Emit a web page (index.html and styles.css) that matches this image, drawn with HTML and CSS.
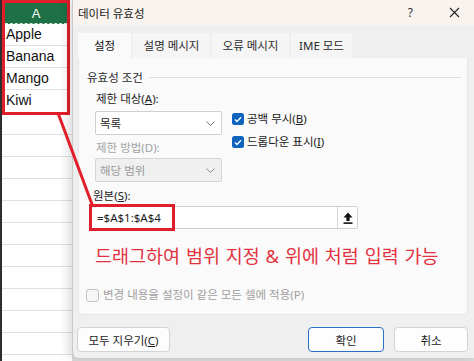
FILE: index.html
```html
<!DOCTYPE html>
<html lang="ko">

<head>
	<title>데이터 유효성</title>
	<meta charset="utf-8" />
	<link rel="stylesheet" href="styles.css">
</head>

<body>
	<div class="screen">
		<!-- Excel column behind the dialog -->
		<div class="sheet">
			<div class="pick">
				<div class="col-head">A</div>
				<div class="cell">Apple</div>
				<div class="cell">Banana</div>
				<div class="cell">Mango</div>
				<div class="cell">Kiwi</div>
			</div>
			<div class="cell first"></div>
			<div class="cell"></div>
			<div class="cell"></div>
			<div class="cell"></div>
			<div class="cell"></div>
			<div class="cell"></div>
			<div class="cell"></div>
			<div class="cell"></div>
			<div class="cell"></div>
			<div class="cell"></div>
			<div class="cell"></div>
		</div>

		<div class="dialog">
			<div class="titlebar">
				<span class="title">데이터 유효성</span>
				<span class="help">?</span>
				<svg class="close" width="11" height="11" viewBox="0 0 11 11">
					<path d="M1 1 L10 10 M10 1 L1 10" stroke="#222" stroke-width="1.1" fill="none" />
				</svg>
			</div>

			<div class="tabs">
				<div class="tab active" style="width: 53px">설정</div>
				<div class="tab" style="width: 77px">설명 메시지</div>
				<div class="tab" style="width: 77px">오류 메시지</div>
				<div class="tab" style="width: 61px">IME 모드</div>
			</div>

			<div class="panel">
				<div class="group">
					<span>유효성 조건</span>
					<span class="rule"></span>
				</div>

				<div class="limits">
					<label class="lbl">제한 대상(<u>A</u>):</label>
					<div class="select">
						<span>목록</span>
						<svg width="9" height="5" viewBox="0 0 9 5">
							<path d="M0.5 0.5 L4.5 4.5 L8.5 0.5" stroke="#777" stroke-width="1" fill="none" />
						</svg>
					</div>
					<label class="lbl off">제한 방법(D):</label>
					<div class="select disabled">
						<span>해당 범위</span>
						<svg width="9" height="5" viewBox="0 0 9 5">
							<path d="M0.5 0.5 L4.5 4.5 L8.5 0.5" stroke="#888" stroke-width="1" fill="none" />
						</svg>
					</div>
					<div class="checks">
						<div class="check">
							<span class="box on">
								<svg width="8" height="7" viewBox="0 0 8 7">
									<path d="M1 3.6 L3 5.6 L7 1.2" stroke="#fff" stroke-width="1.4" fill="none" />
								</svg>
							</span>
							<span>공백 무시(<u>B</u>)</span>
						</div>
						<div class="check">
							<span class="box on">
								<svg width="8" height="7" viewBox="0 0 8 7">
									<path d="M1 3.6 L3 5.6 L7 1.2" stroke="#fff" stroke-width="1.4" fill="none" />
								</svg>
							</span>
							<span>드롭다운 표시(<u>I</u>)</span>
						</div>
					</div>
				</div>

				<div class="source">
					<label class="lbl">원본(<u>S</u>):</label>
					<div class="input">
						<span class="value">=$A$1:$A$4</span>
						<span class="mark"></span>
						<span class="pickbtn">
							<svg width="10" height="12" viewBox="0 0 10 12">
								<path d="M5 0.5 L9.5 5.5 L6.6 5.5 L6.6 9 L3.4 9 L3.4 5.5 L0.5 5.5 Z" fill="#111" />
								<rect x="0.5" y="10.3" width="9" height="1.6" fill="#111" />
							</svg>
						</span>
					</div>
				</div>

				<div class="hint">드래그하여 범위 지정 &amp; 위에 처럼 입력 가능</div>

				<div class="apply">
					<span class="box"></span>
					<span>변경 내용을 설정이 같은 모든 셀에 적용(P)</span>
				</div>
			</div>

			<div class="buttons">
				<button class="btn clear">모두 지우기(<u>C</u>)</button>
				<button class="btn ok">확인</button>
				<button class="btn">취소</button>
			</div>
		</div>

		<!-- annotation line from the cells to the source box -->
		<svg class="arrow" width="474" height="361" viewBox="0 0 474 361">
			<line x1="58" y1="113" x2="93" y2="207" stroke="#e11f2b" stroke-width="3" />
		</svg>
	</div>
</body>

</html>
```

FILE: styles.css
```css
* {
	box-sizing: border-box
}

body,
html {
	margin: 0;
	height: 100%;
	font-family: "Noto Sans", "Noto Sans CJK KR", sans-serif;
	font-size: 11.5px;
	color: #1b1b1b;
}

.screen {
	position: relative;
	display: flex;
	width: 474px;
	height: 361px;
	overflow: hidden;
	background-color: #d9d9d9;
}

/* The spreadsheet column */
.sheet {
	width: 72px;
	flex: none;
	background-color: #fff;
	border-left: 2px solid #2e2e2e;
}

.pick {
	border: 3px solid #e11f2b;
	margin-right: 2px;
}

.col-head {
	height: 21px;
	line-height: 21px;
	background-color: #1e7145;
	color: #fff;
	text-align: center;
	font-family: "Liberation Sans", Arial, sans-serif;
	font-size: 13px;
	border-bottom: 1px dashed #d8e8dd;
}

.cell {
	height: 22px;
	line-height: 21px;
	padding-left: 1px;
	border-bottom: 1px solid #e0e0e0;
	font-family: "Liberation Sans", Arial, sans-serif;
	font-size: 14px;
	color: #111;
}

.pick .cell:last-child {
	border-bottom: none;
}

.cell.first {
	height: 20px;
}

/* The dialog */
.dialog {
	flex: 1;
	height: 358px;
	display: flex;
	flex-direction: column;
	background-color: #efefef;
	border-left: 1px solid #c9c9c9;
	box-shadow: -5px 0 8px rgba(0, 0, 0, 0.12);
	border-bottom-left-radius: 6px;
}

.titlebar {
	height: 25px;
	display: flex;
	align-items: center;
	padding-left: 5px;
	padding-right: 14px;
	background-color: #f8f3ee;
}

.title {
	font-size: 11.5px;
	color: #1a1a1a;
}

.help {
	margin-left: auto;
	margin-right: 36px;
	font-size: 12px;
	color: #333;
}

.tabs {
	display: flex;
	margin-top: 8px;
	padding-left: 5px;
	height: 25px;
}

.tab {
	margin-right: 2px;
	line-height: 25px;
	text-align: center;
	background-color: #f5f5f5;
	color: #2a2a2a;
}

.tab.active {
	background-color: #fafafa;
	color: #111;
}

.panel {
	height: 257px;
	margin-left: 5px;
	margin-right: 6px;
	padding-top: 11px;
	background-color: #fafafa;
	border: 1px solid #e7e7e7;
	border-top: none;
	border-radius: 0 0 4px 4px;
}

.group {
	display: flex;
	align-items: center;
	height: 16px;
	margin-left: 8px;
	margin-right: 6px;
	color: #2a2a2a;
}

.group .rule {
	flex: 1;
	height: 1px;
	margin-left: 6px;
	background-color: #dedede;
}

.limits {
	display: grid;
	grid-template-columns: 127px auto;
	column-gap: 10px;
	margin-top: 6px;
	padding-left: 16px;
}

.limits .lbl,
.limits .select {
	grid-column: 1;
}

.lbl {
	display: block;
	height: 16px;
	line-height: 16px;
	margin-left: 1px;
}

.lbl.off {
	margin-top: 5px;
	color: #a2a2a2;
}

.select {
	display: flex;
	align-items: center;
	justify-content: space-between;
	height: 24px;
	margin-top: 4px;
	padding: 0 6px 0 4px;
	background-color: #fff;
	border: 1px solid #cfcfcf;
	border-radius: 2px;
}

.select.disabled {
	margin-top: 2px;
	background-color: #f0f0f0;
	border-color: #d6d6d6;
	color: #9a9a9a;
}

.checks {
	grid-column: 2;
	grid-row: 2 / span 3;
	display: flex;
	flex-direction: column;
	gap: 7px;
	padding-top: 4px;
}

.check,
.apply {
	display: flex;
	align-items: center;
	height: 16px;
	line-height: 16px;
}

.box {
	display: flex;
	align-items: center;
	justify-content: center;
	width: 12px;
	height: 12px;
	margin-right: 3px;
	border-radius: 2.5px;
}

.box.on {
	background-color: #0f62be;
}

.source {
	margin-top: 6px;
	padding-left: 13px;
}

.input {
	position: relative;
	display: flex;
	align-items: center;
	justify-content: space-between;
	width: 268px;
	height: 23px;
	margin-top: 2px;
	margin-left: -2px;
	padding-left: 6px;
	background-color: #fff;
	border: 1px solid #d0d0d0;
	border-radius: 2px;
	font-size: 11.5px;
}

/* red marker drawn over the typed range */
.input .mark {
	position: absolute;
	left: -2px;
	top: -3px;
	width: 86px;
	height: 27px;
	border: 3px solid #e11f2b;
}

.pickbtn {
	display: flex;
	align-items: center;
	justify-content: center;
	width: 20px;
	height: 21px;
	background-color: #fdfdfd;
	border-left: 1px solid #d6d6d6;
}

.hint {
	margin-top: 15px;
	padding-left: 16px;
	height: 24px;
	line-height: 24px;
	font-size: 18.5px;
	word-spacing: 1px;
	color: #e2323f;
	white-space: nowrap;
}

.apply {
	margin-top: 19px;
	padding-left: 7px;
	color: #a0a0a0;
}

.apply .box {
	width: 13px;
	height: 13px;
	margin-right: 4px;
	background-color: #f6f6f6;
	border: 1px solid #c4c4c4;
	border-radius: 3px;
}

.buttons {
	display: flex;
	margin-top: 12px;
	padding-left: 4px;
	padding-right: 6px;
	gap: 10px;
}

.btn {
	width: 74px;
	height: 25px;
	padding: 0;
	font-family: "Noto Sans", "Noto Sans CJK KR", sans-serif;
	font-size: 11.5px;
	color: #1b1b1b;
	background-color: #fdfdfd;
	border: 1px solid #d3d3d3;
	border-radius: 4px;
}

.btn.clear {
	width: 93px;
	margin-right: auto;
}

.btn.ok {
	width: 76px;
	border: 1px solid #2a70c4;
}

.arrow {
	position: absolute;
	left: 0;
	top: 0;
	pointer-events: none;
}
```
